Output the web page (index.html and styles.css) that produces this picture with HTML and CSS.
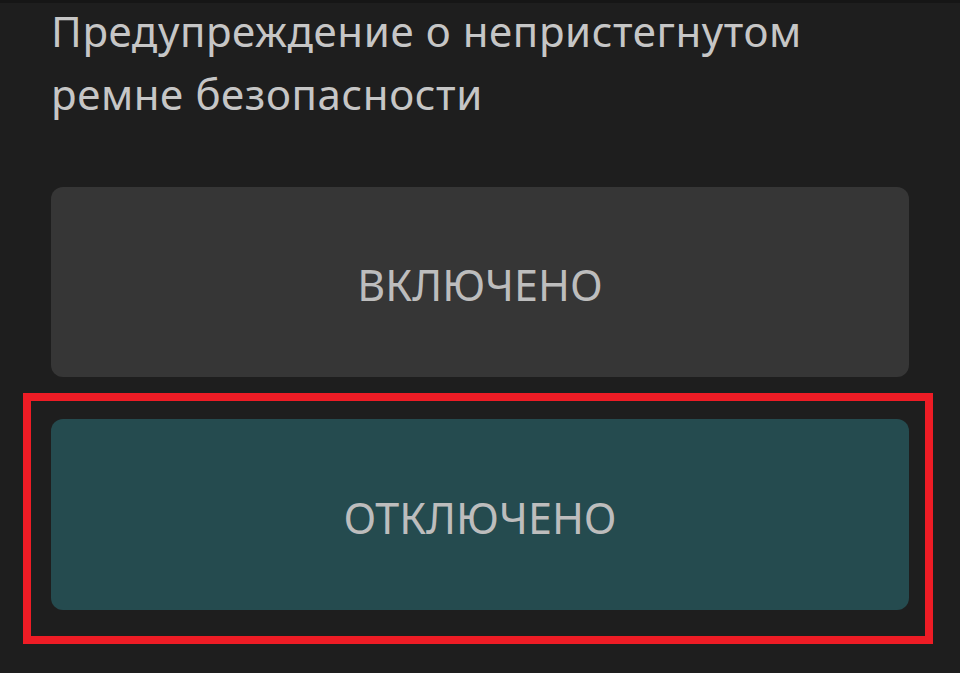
FILE: index.html
```html
<!DOCTYPE html>
<html lang="ru">
<head>
<meta charset="utf-8">
<title>Предупреждение о непристегнутом ремне безопасности</title>
<link rel="stylesheet" href="styles.css">
</head>
<body>
<div class="screen">
  <div class="content">
    <h1 class="title">Предупреждение о непристегнутом ремне безопасности</h1>
    <div class="options">
      <button class="option option-on" type="button">ВКЛЮЧЕНО</button>
      <div class="option-wrap">
        <button class="option option-off" type="button">ОТКЛЮЧЕНО</button>
        <div class="highlight"></div>
      </div>
    </div>
  </div>
</div>
</body>
</html>
```
FILE: styles.css
```css
html, body {
  margin: 0;
  padding: 0;
  background: #1e1e1e;
}

.screen {
  width: 960px;
  height: 673px;
  box-sizing: border-box;
  border-top: 3px solid #161616;
  background: #1e1e1e;
  overflow: hidden;
  font-family: "Noto Sans", "Open Sans", sans-serif;
}

.content {
  padding: 0 51px;
}

.title {
  margin: -4px 0 0 0;
  width: 800px;
  font-size: 42px;
  font-weight: 400;
  letter-spacing: 0.6px;
  line-height: 63px;
  color: #c6c6c6;
}

.options {
  display: flex;
  flex-direction: column;
  gap: 42px;
  margin-top: 62px;
}

.option {
  display: flex;
  align-items: center;
  justify-content: center;
  width: 858px;
  height: 190px;
  padding: 4px 0 0 0;
  border: none;
  border-radius: 12px;
  font-family: "Noto Sans", "Open Sans", sans-serif;
  font-size: 43px;
  font-weight: 400;
  color: #bdbdbd;
  box-sizing: border-box;
}

.option-on {
  background: #363636;
}

.option-off {
  height: 191px;
  background: #254b4f;
  padding-top: 6px;
}

.option-wrap {
  position: relative;
}

.highlight {
  position: absolute;
  top: -26px;
  left: -28px;
  right: -24px;
  bottom: -34px;
  border: 8px solid #ee1c25;
  pointer-events: none;
}
```
